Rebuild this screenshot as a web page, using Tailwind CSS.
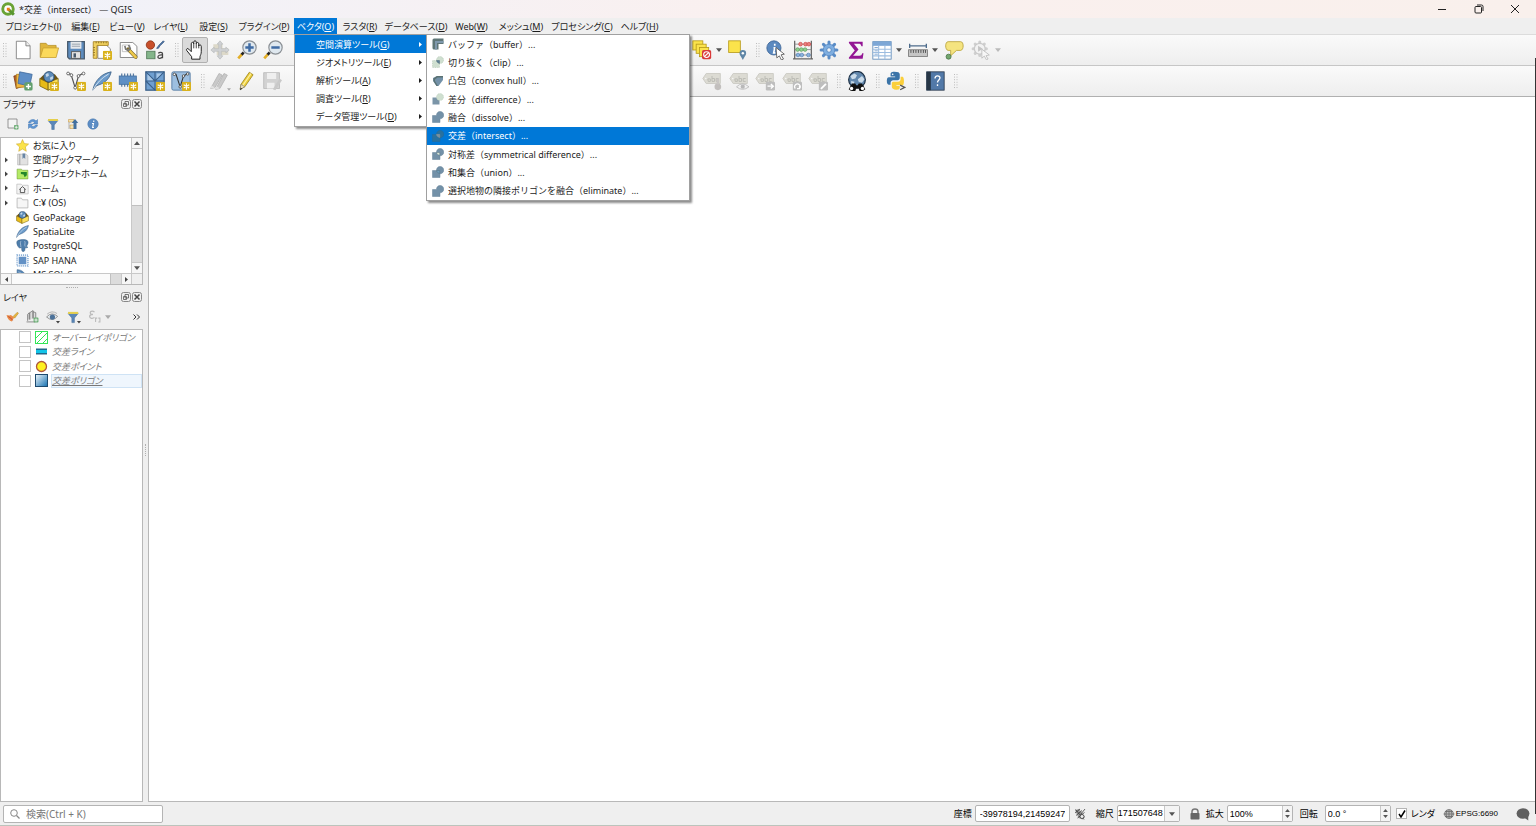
<!DOCTYPE html>
<html lang="ja">
<head>
    <meta charset="UTF-8">
    <meta name="viewport" content="width=device-width, initial-scale=1.0">
    <title>*交差（intersect） — QGIS</title>
    <script src="https://cdn.jsdelivr.net/npm/@tailwindcss/browser@4"></script>
    <style>
        body {
            font-family: "Noto Sans", "Noto Sans CJK JP", sans-serif;
            font-feature-settings: "palt";
        }
        .full-width {
            font-feature-settings: normal;
        }
    </style>
</head>
<body class="h-screen flex flex-col overflow-hidden bg-[#efefef] text-[9px] leading-none text-[#1c1c1c] whitespace-nowrap">

    <!-- Icon definitions -->
    <svg class="absolute w-0 h-0">
        <defs>
            <linearGradient id="blueFill" x1="0" y1="0" x2="1" y2="1"><stop offset="0" stop-color="#f2f8fc"/><stop offset="1" stop-color="#1470b0"/></linearGradient>
            <symbol id="star" viewBox="0 0 10 10"><rect width="10" height="10" rx="1.5" fill="#d9b21c"/><path d="M5 1.500v7M2 3.200l6 3.600M8 3.200L2 6.800" stroke="#fff" stroke-width="1.200"/></symbol>
            <symbol id="caret" viewBox="0 0 8 5"><path d="M0 0h8L4 5z" fill="currentColor"/></symbol>
            <symbol id="right" viewBox="0 0 5 8"><path d="M0 0v8l5-4z" fill="currentColor"/></symbol>
            <symbol id="grip" viewBox="0 0 4 14"><path d="M.5 0v14M3 0v14" stroke="#bdbdbd" stroke-dasharray="1 1.6"/></symbol>

            <symbol id="new" viewBox="0 0 24 24"><path d="M4 1.500h11.500l5 5.500v15.500H4z" fill="#fff" stroke="#777"/><path d="M15.500 1.500V7h5" fill="#eee" stroke="#777"/></symbol>
            <symbol id="open" viewBox="0 0 24 24"><path d="M1.500 20.500V4h7l2 2.500h10V10" fill="#e0b63c" stroke="#b8932a"/><path d="M1.500 21L5 9.500h18.500L20.500 21z" fill="#fbd95b" stroke="#c9a132"/></symbol>
            <symbol id="save" viewBox="0 0 24 24"><path d="M2 2h20v20.500H4L2 20.500z" fill="#5c8bbd" stroke="#47596b" stroke-width="1.500"/><rect x="5.500" y="2" width="13" height="8.500" fill="#e6e9ec"/><path d="M7 5h10M7 7.500h10" stroke="#8b97a3"/><rect x="6.500" y="14" width="11" height="8" fill="#e3e3e3" stroke="#555"/><rect x="9" y="16" width="3" height="5" fill="#47596b"/></symbol>
            <symbol id="layout" viewBox="0 0 24 24"><path d="M7 6h10l5 4.500V22H7z" fill="#fff" stroke="#777"/><path d="M1.500 2h18v4.500H6V22H1.500z" fill="#f1d15f" stroke="#a58121"/><path d="M5 2v2M8 2v2M11 2v2M14 2v2M17 2v2M1.500 9h2M1.500 12h2M1.500 15h2M1.500 18h2" stroke="#80641a"/><use href="#star" x="13" y="13" width="11" height="11"/></symbol>
            <symbol id="manager" viewBox="0 0 24 24"><path d="M1.500 3h15l5 4.500V21h-20z" fill="#fff" stroke="#777"/><path d="M4 6h9v8H4z" fill="none" stroke="#bbb"/><path d="M11 11l9 9.500" stroke="#7a6a30" stroke-width="4.500" stroke-linecap="round"/><path d="M12 12l8 8.500" stroke="#efc94a" stroke-width="3" stroke-linecap="round"/><path d="M7 7l1 4 3.500 1.500 2-2.500-2-4" fill="none" stroke="#777" stroke-width="2"/></symbol>
            <symbol id="style" viewBox="0 0 24 24"><circle cx="6.500" cy="6" r="5" fill="#c8502b" stroke="#8e3518"/><path d="M14 10l3-4 5-5 1 1-5 5-2 3z" fill="#4f78ab" stroke="#3d5d85"/><rect x="2" y="13.500" width="10" height="9" fill="#83b58a" stroke="#517a57"/><path d="M16 16c1-1.500 5-1.500 5 .5V22M21 18c-3-.5-5.500.5-5.500 2.300 0 2.500 4 2 5.500 0" fill="none" stroke="#444" stroke-width="1.500"/></symbol>
            <symbol id="hand" viewBox="0 0 24 24"><path d="M8 23v-3L2 12.500c-1-2 1.200-3 2.500-1.500L7.500 14V4.500c0-2.300 3-2.300 3 0V2.600c0-2.300 3-2.300 3 0v1.800c.3-2 3-2 3 .2V7c.5-1.700 3-1.400 3 .5V14c0 3-1 4-1.500 6v3z" fill="#fff" stroke="#222" stroke-width="1.200"/><path d="M10.500 4v6M13.500 4v6M16.500 6v4" stroke="#222"/></symbol>
            <symbol id="pansel" viewBox="0 0 24 24"><path d="M4 5h11v5h7v8H8v-5H4z" fill="#ddd9c9"/><path d="M12 1l3.500 4h-2v5.500H19v-2l4 3.500-4 3.500v-2h-5.500V19h2L12 23l-3.500-4h2v-5.500H5v2L1 12l4-3.500v2h5.500V5h-2z" fill="#d0d2d4" stroke="#b4b6b8" stroke-width=".7"/></symbol>
            <symbol id="lens" viewBox="0 0 24 24"><path d="M8 15l-3 3" stroke="#222" stroke-width="3"/><path d="M5.500 17.500L1.500 22" stroke="#e3ae27" stroke-width="3.200"/><circle cx="15" cy="9" r="8" fill="#dfe8ef" stroke="#8a8f94" stroke-width="1.400"/></symbol>
            <symbol id="zoomin" viewBox="0 0 24 24"><use href="#lens"/><path d="M15 4v10M10 9h10" stroke="#3f6ba4" stroke-width="3"/></symbol>
            <symbol id="zoomout" viewBox="0 0 24 24"><use href="#lens"/><path d="M10 9h10" stroke="#3f6ba4" stroke-width="3"/></symbol>

            <symbol id="deselect" viewBox="0 0 24 24"><g fill="#fbe34b" stroke="#b89b1b"><rect x="1" y="1" width="12" height="11"/><rect x="5" y="5" width="12" height="11"/><rect x="9" y="9" width="11" height="11"/></g><rect x="12" y="12" width="11" height="11" rx="2" fill="#d93a3a"/><circle cx="17.500" cy="17.500" r="3.500" fill="none" stroke="#fff" stroke-width="1.300"/><path d="M15 20l5-5" stroke="#fff" stroke-width="1.300"/></symbol>
            <symbol id="selloc" viewBox="0 0 24 24"><rect x="2" y="1" width="14" height="14" fill="#fbe34b" stroke="#b89b1b"/><path d="M19 24c-2-4-4-5.500-4-8a4 4 0 0 1 8 0c0 2.500-2 4-4 8z" fill="#5f86a6"/><circle cx="19" cy="16" r="1.500" fill="#fff"/></symbol>
            <symbol id="identify" viewBox="0 0 24 24"><circle cx="9.500" cy="9.500" r="8.500" fill="#5b89bf" stroke="#3e6697"/><path d="M10.500 4.500v2.500M9 9.500h1.500l-1.300 6h2" stroke="#fff" stroke-width="2" fill="none"/><path d="M12 9l10 8-4 .8 3 5-2.500 1.200-2.500-5-3 2.500z" fill="#fff" stroke="#555"/></symbol>
            <symbol id="abacus" viewBox="0 0 24 24"><path d="M2 1v22M22 1v22M0 22.500h24" stroke="#666" stroke-width="1.500"/><path d="M2 5h20M2 11.500h20M2 18h20" stroke="#888"/><g stroke-width=".8"><g fill="#e88080" stroke="#c44"><circle cx="9" cy="5" r="2.200"/><circle cx="15" cy="5" r="2.200"/><circle cx="19" cy="5" r="2.200"/></g><g fill="#8fd08f" stroke="#5a9a5a"><circle cx="5.500" cy="11.500" r="2.200"/><circle cx="10" cy="11.500" r="2.200"/><circle cx="14.500" cy="11.500" r="2.200"/></g><g fill="#8ab3dd" stroke="#4f7bb4"><circle cx="6" cy="18" r="2.200"/><circle cx="10.500" cy="18" r="2.200"/><circle cx="18.500" cy="18" r="2.200"/></g></g></symbol>
            <symbol id="gear" viewBox="0 0 24 24"><g stroke="#5a8cc6" stroke-width="3.600" stroke-linecap="round"><path d="M12 2.500v19M2.500 12h19M5.300 5.300l13.400 13.400M18.700 5.300L5.300 18.700"/></g><circle cx="12" cy="12" r="7" fill="#7eaee0" stroke="#5a8cc6"/><circle cx="12" cy="12" r="2.700" fill="#eef3f8" stroke="#4f82bd"/></symbol>
            <symbol id="sigma" viewBox="0 0 24 24"><path d="M3.500 2H20v5.500h-1.500C18 5 17 4.500 15 4.500H9.500l5.500 7-6.500 7.500H16c2 0 3-1 3.500-3H21L20 22.500H3.500V21l7-8.500-7-9z" fill="#931694"/></symbol>
            <symbol id="table" viewBox="0 0 24 24"><rect x="1" y="2" width="22" height="21" fill="#fff" stroke="#5b88b8"/><rect x="1" y="2" width="22" height="5" fill="#7da7d6"/><path d="M1 11h22M1 15h22M1 19h22M8 7v16M15.500 7v16" stroke="#9dbde0" stroke-width="1.300"/><path d="M3 9h4M3 13h4M3 17h4" stroke="#6d98c8"/></symbol>
            <symbol id="ruler" viewBox="0 0 24 24"><path d="M2 4.500v5M22 4.500v5M2 7h20" stroke="#4e6c8c" stroke-width="1.600"/><rect x=".7" y="11.700" width="22.600" height="8" fill="#c5c5c5" stroke="#777"/><path d="M3.500 12v3.500M6.500 12v3.500M9.500 12v3.500M12.500 12v3.500M15.500 12v3.500M18.500 12v3.500M21 12v3.500" stroke="#444"/></symbol>
            <symbol id="tip" viewBox="0 0 24 24"><path d="M5 2h15c4 0 4 10 0 10.500h-5L8 19v-6.500H5C1 12 1 2 5 2z" fill="#f5e480" stroke="#b8a23a"/><circle cx="5.500" cy="20" r="3" fill="#72a66e" stroke="#4d764a"/></symbol>
            <symbol id="action" viewBox="0 0 24 24"><g stroke="#cfcfcf" stroke-width="3.600" stroke-linecap="round"><path d="M10.500 2.500v16M2.500 10.500h16M5 5l11 11M16 5L5 16"/></g><circle cx="10.500" cy="10.500" r="6.500" fill="#f2f2f2" stroke="#c9c9c9" stroke-width="1.500"/><path d="M8.500 7v7l5.500-3.500z" fill="#c4c4c4"/><path d="M13 11l9 7-4 .8 2.500 4-2 1-2.500-4.500-3 2.500z" fill="#f7f7f7" stroke="#bbb"/></symbol>

            <symbol id="source" viewBox="0 0 24 24"><path d="M1 6l11-2 3 13-11 4z" fill="#b35c27" stroke="#7e3d16"/><path d="M4 4l12 0 1 15-13 1z" fill="#f0b73f" stroke="#b38122"/><path d="M8 1l15 3-3 14-14-3z" fill="#5e8ec6" stroke="#456e9f"/><rect x="13.500" y="13.500" width="10" height="10" rx="2" fill="#63a06e"/><path d="M18.500 15.500v6M15.500 18.500h6" stroke="#fff" stroke-width="1.700"/></symbol>
            <symbol id="gpkg" viewBox="0 0 24 24"><path d="M1 9l10 5v9L1 18z" fill="#e8bb17" stroke="#7a6412"/><path d="M11 14l12-5v9l-12 5z" fill="#fbe05a" stroke="#7a6412"/><path d="M1 9l4-4 14-1 4 5-12 5z" fill="#6e5512"/><circle cx="12" cy="7" r="6.300" fill="#5d8cba" stroke="#2c4b6b"/><path d="M8 4l3-1.500 1 3-3 2zM13 8l3.500-2 .5 3-3 2z" fill="#c4d7e8"/></symbol>
            <symbol id="gpkgNew" viewBox="0 0 24 24"><use href="#gpkg"/><use href="#star" x="13" y="13" width="11" height="11"/></symbol>
            <symbol id="shape" viewBox="0 0 24 24"><path d="M2.500 3l3.500 1 5 16 4-14 5-3" stroke="#555" stroke-width="1.400" fill="none"/><g fill="#fff" stroke="#555"><circle cx="2.500" cy="3" r="1.700"/><circle cx="6.500" cy="5" r="1.700"/><circle cx="11" cy="20" r="1.700"/><circle cx="15" cy="6" r="1.700"/><circle cx="21" cy="3" r="1.700"/></g><use href="#star" x="13" y="13" width="11" height="11"/></symbol>
            <symbol id="feather" viewBox="0 0 24 24"><path d="M1 23c1-6 4-11 8-15S18 2 23 1c-1 5-4 10-9 13-3 2-6 2.500-9 4z" fill="#6b9bcb" stroke="#3d6187"/><path d="M1 23C5 15 12 8 20 3.500" stroke="#e5eef6" fill="none"/></symbol>
            <symbol id="featherNew" viewBox="0 0 24 24"><use href="#feather"/><use href="#star" x="13" y="13" width="11" height="11"/></symbol>
            <symbol id="chip" viewBox="0 0 24 24"><path d="M4.500 3v16M8 3v16M11.500 3v16M15 3v16M18.500 3v16" stroke="#5a7da3" stroke-width="1.500"/><rect x="1.500" y="6" width="20.500" height="10" fill="#5e8fc4" stroke="#44709f"/><use href="#star" x="13" y="13" width="11" height="11"/></symbol>
            <symbol id="mesh" viewBox="0 0 24 24"><rect x="1" y="1" width="22" height="22" fill="#6f9fd0" stroke="#3a5f88" stroke-width="1.500"/><path d="M12 1v22M1 12h22M1 1l11 11 11-11M1 12l11 11" stroke="#3a5f88" stroke-width="1.300" fill="none"/><path d="M3 11l7 0-7-7zM14 3h6l-6 6z" fill="#a9c7e5"/><use href="#star" x="13" y="13" width="11" height="11"/></symbol>
            <symbol id="virtual" viewBox="0 0 24 24"><rect x="1" y="1" width="22" height="22" rx="2" fill="#9dbfe0" stroke="#4c749e"/><path d="M3 4l3 0 5 15 4-13 5-3" fill="none" stroke="#333" stroke-width="1.300"/><g fill="#fff" stroke="#444"><circle cx="4" cy="4" r="1.500"/><circle cx="11" cy="19" r="1.500"/><circle cx="15" cy="6" r="1.500"/><circle cx="20" cy="3.500" r="1.500"/></g><use href="#star" x="13" y="13" width="11" height="11"/></symbol>
            <symbol id="edits" viewBox="0 0 24 24"><path d="M2 21L12 3l4 2L7 20zM8 22L18 3l4 2-9 16z" fill="#c9c9c9" stroke="#b5b5b5"/><path d="M2 21l1-4 4 3zM8 22l1-4 4 3z" fill="#e2e2e2"/></symbol>
            <symbol id="pencil" viewBox="0 0 24 24"><path d="M5 22l1-6L16 1.500l4.500 3L10.500 19z" fill="#edcf3c" stroke="#9c8420"/><path d="M8 17.500L18 3" stroke="#fdf0a0" stroke-width="1.500"/><path d="M5 22l1-6 4.500 3z" fill="#efe1c0" stroke="#777" stroke-width=".7"/><path d="M5 23l.5-3 2 1.300z" fill="#222"/></symbol>
            <symbol id="saveGray" viewBox="0 0 24 24"><path d="M2 2h19v19H2z" fill="#d2d2d2" stroke="#bbb"/><path d="M6 2.500h11v7H6zM6 14h9v7H6z" fill="#efefef"/><path d="M13 22l8-13 3 2-8 12z" fill="#c9c9c9"/></symbol>
            <symbol id="tag" viewBox="0 0 24 24"><path d="M1 9l4-6h17v12H5z" fill="#dcdbd3" stroke="#c9c8c0"/><circle cx="4.500" cy="9" r="1" fill="#f5f5f5"/><path d="M7 9.500h3v3H7.500zM12 6v6.500h3V9h-3M20 9h-3v3.500h3" stroke="#bcbcb5" stroke-width="1.200" fill="none"/></symbol>
            <symbol id="tagPin" viewBox="0 0 24 24"><use href="#tag"/><circle cx="19" cy="19" r="4" fill="#c2bfbd"/><path d="M17.500 9h3v7h-3z" fill="#c9c6c4"/></symbol>
            <symbol id="tagEye" viewBox="0 0 24 24"><use href="#tag"/><path d="M9 19q7-7 15 0-8 6-15 0z" fill="#f0f0f0" stroke="#b9b9b9"/><circle cx="16.500" cy="18.800" r="2.500" fill="#b9b9b9"/></symbol>
            <symbol id="tagMove" viewBox="0 0 24 24"><use href="#tag"/><rect x="13" y="13" width="11" height="10.500" rx="1.500" fill="#bebebe"/><path d="M15 18.200h6M19 15.500l3 2.700-3 2.700" stroke="#fff" stroke-width="1.600" fill="none"/></symbol>
            <symbol id="tagRot" viewBox="0 0 24 24"><use href="#tag"/><rect x="13" y="13" width="11" height="10.500" rx="1.500" fill="#bebebe"/><path d="M16 21a3.300 3.300 0 1 1 5 0M21 18v3h-3" stroke="#fff" stroke-width="1.500" fill="none"/></symbol>
            <symbol id="tagEdit" viewBox="0 0 24 24"><use href="#tag"/><rect x="13" y="13" width="11" height="10.500" rx="1.500" fill="#bebebe"/><path d="M15.500 21.500l6-6" stroke="#fff" stroke-width="2.300"/></symbol>
            <symbol id="globe" viewBox="0 0 24 24"><circle cx="12" cy="10.500" r="10" fill="#6288ae" stroke="#1e3146" stroke-width="1.500"/><path d="M4 6l5-3 3 2-2 4-4 1zM13 10l5-4 3 4-3 4-4-1zM5 12l4 1-1 3-3-1z" fill="#cbdcea"/><path d="M6 15h4l1 2h2l1-2h4l4 7-3 2h-4l-1-3h-3l-1 3H5l-3-2z" fill="#111"/><circle cx="5.500" cy="21" r="2" fill="#fff"/><circle cx="18.500" cy="21" r="2" fill="#fff"/></symbol>
            <symbol id="python" viewBox="0 0 24 24"><path d="M10 1c-4 0-4.500 1.500-4.500 3v2.500h5.500v1H3.500C1.500 7.500 1 9.500 1 12c0 3 1 4.500 2.500 4.500h2V14c0-2 1.500-3 3-3H14c1.500 0 2.500-1 2.500-2.500V4c0-2-2-3-6.500-3z" fill="#3b74a8"/><circle cx="8" cy="4" r="1" fill="#fff"/><path d="M17.500 7v3c0 2-1.500 3-3 3H9c-1.500 0-2 1-2 2v4c0 2 2 3.500 5 3.500 4 0 4.500-1 4.500-3V18h-4v-1h8c1.500-1 1.500-9-.5-10z" fill="#fbcf3b"/><path d="M17 17l5.500 2.700L17 22.500" fill="none" stroke="#555" stroke-width="1.500"/></symbol>
            <symbol id="book" viewBox="0 0 24 24"><rect x="2" y="1" width="21" height="22" fill="#5279a8" stroke="#2b3b4e"/><rect x="2" y="1" width="5" height="22" fill="#273646"/><path d="M12 9c0-4 6-4 6-.8 0 2.500-3 2.500-3 5.500M15 16v2" stroke="#fff" stroke-width="1.600" fill="none"/></symbol>

            <!-- dock icons -->
            <symbol id="addLayer" viewBox="0 0 24 24"><path d="M2 2h18v18H2z" fill="#f4f4f4" stroke="#777" stroke-width="1.500"/><rect x="14" y="14" width="9" height="9" rx="1.500" fill="#6fae78"/><path d="M18.500 15.500v6M15.500 18.500h6" stroke="#fff" stroke-width="1.500"/></symbol>
            <symbol id="refresh" viewBox="0 0 24 24"><path d="M3 10C4 3 14 1 18 6l3-3v9h-9l3-3c-3-3-7-2-8 1zM21 14c-1 7-11 9-15 4l-3 3v-9h9l-3 3c3 3 7 2 8-1z" fill="#5f95d2" stroke="#4177b2"/></symbol>
            <symbol id="filter" viewBox="0 0 24 24"><path d="M2 5h20l-7.500 9v9h-5v-9z" fill="#5b87b8" stroke="#446a95"/><rect x="2" y="2" width="20" height="4" fill="#e5cf4d"/></symbol>
            <symbol id="collapse" viewBox="0 0 24 24"><path d="M3 3h11v5H3zM6 14h10v7H6z" fill="#f3e2b0" stroke="#c78c2a"/><path d="M4 8v14" stroke="#777"/><path d="M16 2l6.500 8H19v12h-6V10H9.500z" fill="#44719f"/></symbol>
            <symbol id="info" viewBox="0 0 24 24"><circle cx="12" cy="12" r="10.500" fill="#5b8cc4" stroke="#4474ab"/><path d="M13.500 5v3M10 11h3l-1.700 8h2.500" stroke="#fff" stroke-width="2.200" fill="none"/></symbol>
            <symbol id="fav" viewBox="0 0 24 24"><path d="M12 1l3.300 7.500 8 .8-6 5.400 1.700 8L12 18.500l-7 4.200 1.700-8-6-5.400 8-.8z" fill="#fbe34a" stroke="#c9a321"/></symbol>
            <symbol id="bookmark" viewBox="0 0 24 24"><path d="M3 2h15l4 3v17H3z" fill="#e2e2e2" stroke="#aaa"/><path d="M7 2v20" stroke="#aaa" stroke-width="2"/><path d="M12 1h5v10l-2.500-2.500L12 11z" fill="#6785a5"/></symbol>
            <symbol id="projHome" viewBox="0 0 24 24"><path d="M2 4h8l2 2h10v16H2z" fill="#b4ea66" stroke="#6c9a2f"/><path d="M9 9h11v6l-4 4-2-5-5-1z" fill="#23862b"/></symbol>
            <symbol id="home" viewBox="0 0 24 24"><path d="M1.500 4h8l2 2h11v16h-21z" fill="#f4f4f4" stroke="#aaa"/><path d="M6 14l6-5.500 6 5.500M8 13v6.500h8V13" fill="none" stroke="#444" stroke-width="1.600"/></symbol>
            <symbol id="folder" viewBox="0 0 24 24"><path d="M2 4h8l2 3h10v15H2z" fill="#f6f6f6" stroke="#aaa" stroke-width="1.300"/></symbol>
            <symbol id="pg" viewBox="0 0 24 24"><path d="M3 3c5-2 14-3 18 0 3 3 0 8-2 11l3 1c-2 2-4 1-5 1-1 4 0 7-4 7-3 0-2-4-3-8-3 3-5 1-6-1C2 11 0 5 3 3z" fill="#4e7dab" stroke="#3b648c"/><path d="M9 4c-2 3 0 7 0 11M16 4c2 4-1 6 1 10" stroke="#e2ebf3" fill="none"/></symbol>
            <symbol id="hana" viewBox="0 0 24 24"><rect x="2" y="2" width="20" height="20" fill="none" stroke="#8fb2d8" stroke-width="3" stroke-dasharray="2 1.600"/><rect x="5" y="5" width="14" height="14" fill="#6391c5"/></symbol>
            <symbol id="mssql" viewBox="0 0 24 24"><path d="M2 3c9 0 16 6 20 20C16 17 8 20 2 17z" fill="#5584b4" stroke="#3c668f"/><path d="M4 7c5 1 9 5 12 9" stroke="#c7d8e8" fill="none"/></symbol>
            <symbol id="brush" viewBox="0 0 24 24"><path d="M13 12l8-8 2 2-7 9z" fill="#e6b63d" stroke="#b4862a"/><path d="M1 9l5 1 3-1 6 5-4 7c-5-1-9-6-10-12z" fill="#ea8a46"/><path d="M4 12l5 3 3 4" stroke="#b3483b" stroke-width="1.500" fill="none"/></symbol>
            <symbol id="group" viewBox="0 0 24 24"><path d="M3 20V8l3-3v12M7 18V5l6-4v14M13 16V3l5 2v12M1 22h16" fill="#ddd" stroke="#777" stroke-width="1.500"/><rect x="14" y="14" width="9" height="9" rx="1.500" fill="#6fae78"/><path d="M18.500 15.500v6M15.500 18.500h6" stroke="#fff" stroke-width="1.500"/></symbol>
            <symbol id="eye" viewBox="0 0 24 24"><path d="M1 12Q10 2 20 11 11 21 1 12z" fill="#e9eef2" stroke="#888" stroke-width="1.500"/><circle cx="11" cy="12" r="4.500" fill="#4d7299"/><path d="M2 7Q10 0 19 6" stroke="#aaa" fill="none" stroke-width="1.500"/><path d="M17 19h7l-3.500 4z" fill="#444"/></symbol>
            <symbol id="filterMenu" viewBox="0 0 24 24"><use href="#filter" width="21" height="24"/><path d="M17 19h7l-3.500 4z" fill="#444"/></symbol>
            <symbol id="expr" viewBox="0 0 24 24"><path d="M12 4C8 0 2 3 5 7c1 2 4 1 4 1s-6 0-6 4 6 4 9 2" stroke="#bbb" stroke-width="2.300" fill="none"/><path d="M14 22v-7h3M19 15h3v7h-3" stroke="#bbb" stroke-width="2" fill="none"/></symbol>

            <!-- geoprocessing icons -->
            <symbol id="buffer" viewBox="0 0 24 24"><path d="M1 4q0-3 3-3h19v11H13v11H4q-3 0-3-3z" fill="#5f7677"/><path d="M8 23V8h15" fill="none" stroke="#8099ad" stroke-width="4"/></symbol>
            <symbol id="clip" viewBox="0 0 24 24"><path d="M1 9h14v14H1z" fill="#cfdfd0" stroke="#a9bfab" stroke-dasharray="2 1.500"/><circle cx="16" cy="8" r="7" fill="#cfdfd0" stroke="#a9bfab" stroke-dasharray="2 1.500"/><path d="M9 9h6v6C12 14 9.500 12 9 9z" fill="#5e7f96" stroke="#4c6878"/></symbol>
            <symbol id="hull" viewBox="0 0 24 24"><path d="M2 6l8-4h12v8L13 22H9L2 12z" fill="#7391a8"/><path d="M9 22L3 12V7l7-5h12v3H11L6 9v3l6 10z" fill="#5b7272"/></symbol>
            <symbol id="diff" viewBox="0 0 24 24"><path d="M1 9h14v14H1z" fill="#7b95a8"/><circle cx="16" cy="8" r="7" fill="#cfdfd0" stroke="#b3c8b5" stroke-dasharray="2 1.500"/></symbol>
            <symbol id="dissolve" viewBox="0 0 24 24"><path d="M1 9h8a7.300 7.300 0 1 1 7 6.500V23H1z" fill="#7391a8" stroke="#668398"/></symbol>
            <symbol id="inter" viewBox="0 0 24 24"><path d="M1 9h8a7.300 7.300 0 1 1 7 6.500V23H1z" fill="#28719f" stroke="#2b6b93"/><path d="M9 9h6.500v6C12 14 9.500 12 9 9z" fill="#7391a8" stroke="#a29a8a"/></symbol>
            <symbol id="symdiff" viewBox="0 0 24 24"><use href="#dissolve"/><path d="M9 9h6.500v6C12 14 9.500 12 9 9z" fill="#dce8dc" stroke="#54707e"/></symbol>
            <symbol id="union" viewBox="0 0 24 24"><use href="#dissolve"/><path d="M9 9h6.500v6C12 14 9.500 12 9 9z" fill="#6f9dbb" stroke="#54707e"/></symbol>
        </defs>
    </svg>

    <!-- Title bar -->
    <header class="h-[18px] shrink-0 flex items-center bg-linear-to-r from-[#f0f2fa] via-[#faf0ef] to-[#f9f0ec]">
        <svg class="w-[14px] h-[14px] ml-px mr-1" viewBox="0 0 24 24"><circle cx="12" cy="12" r="9" fill="#fff" stroke="#6aa337" stroke-width="5"/><path d="M13 13l9 9" stroke="#589632" stroke-width="5"/><path d="M10 10h6l-2 2 2 2-2 2-2-2-2 2z" fill="#ee7913"/></svg>
        <h1 class="full-width">*交差（intersect） — QGIS</h1>
        <div class="ml-auto flex w-[87px] mr-[14px] items-center justify-between">
            <button aria-label="最小化"><svg class="w-[14px] h-[10px]" viewBox="0 0 14 10"><path d="M3 5.500h8" stroke="#222"/></svg></button>
            <button aria-label="元に戻す"><svg class="w-[10px] h-[10px]" viewBox="0 0 10 10"><rect x="1" y="2.500" width="6.500" height="6.500" rx="1" fill="none" stroke="#222"/><path d="M3 1h4.500Q9 1 9 2.500V7" fill="none" stroke="#222"/></svg></button>
            <button aria-label="閉じる"><svg class="w-[14px] h-[10px]" viewBox="0 0 14 10"><path d="M3 1l8 8M11 1L3 9" stroke="#222"/></svg></button>
        </div>
    </header>

    <!-- Menu bar -->
    <nav class="relative z-10 h-4 shrink-0 flex pl-[2px]">
        <button class="w-[63px]">プロジェクト(<u>J</u>)</button>
        <button class="w-[41px]">編集(<u>E</u>)</button>
        <button class="w-[42px]">ビュー(<u>V</u>)</button>
        <button class="w-[45px]">レイヤ(<u>L</u>)</button>
        <button class="w-[41px]">設定(<u>S</u>)</button>
        <button class="w-[60px]">プラグイン(<u>P</u>)</button>
        <div class="relative w-[43px]">
            <button class="w-full h-full bg-[#0078d7] text-white">ベクタ(<u>O</u>)</button>
            <ul class="absolute left-0 top-4 w-[133px] h-[93px] grid grid-rows-5 bg-white border border-[#a0a0a0] shadow-[2px_2px_2px_rgba(0,0,0,0.45)]">
                <li class="grid bg-[#0078d7] text-white"><button class="flex items-center justify-between pl-[21px] pr-1"><span>空間演算ツール(<u>G</u>)</span><svg class="w-[3px] h-[5px]"><use href="#right"/></svg></button></li>
                <li class="grid"><button class="flex items-center justify-between pl-[21px] pr-1"><span>ジオメトリツール(<u>E</u>)</span><svg class="w-[3px] h-[5px]"><use href="#right"/></svg></button></li>
                <li class="grid"><button class="flex items-center justify-between pl-[21px] pr-1"><span>解析ツール(<u>A</u>)</span><svg class="w-[3px] h-[5px]"><use href="#right"/></svg></button></li>
                <li class="grid"><button class="flex items-center justify-between pl-[21px] pr-1"><span>調査ツール(<u>R</u>)</span><svg class="w-[3px] h-[5px]"><use href="#right"/></svg></button></li>
                <li class="grid"><button class="flex items-center justify-between pl-[21px] pr-1"><span>データ管理ツール(<u>D</u>)</span><svg class="w-[3px] h-[5px]"><use href="#right"/></svg></button></li>
            </ul>
            <ul class="full-width absolute left-[132px] top-4 w-[264px] h-[167px] grid grid-rows-9 bg-white border border-[#a0a0a0] shadow-[2px_2px_2px_rgba(0,0,0,0.45)]">
                <li class="grid"><button class="flex items-center gap-1 pl-[5px]"><svg class="w-3 h-3"><use href="#buffer"/></svg>バッファ（buffer）...</button></li>
                <li class="grid"><button class="flex items-center gap-1 pl-[5px]"><svg class="w-3 h-3"><use href="#clip"/></svg>切り抜く（clip）...</button></li>
                <li class="grid"><button class="flex items-center gap-1 pl-[5px]"><svg class="w-3 h-3"><use href="#hull"/></svg>凸包（convex hull）...</button></li>
                <li class="grid"><button class="flex items-center gap-1 pl-[5px]"><svg class="w-3 h-3"><use href="#diff"/></svg>差分（difference）...</button></li>
                <li class="grid"><button class="flex items-center gap-1 pl-[5px]"><svg class="w-3 h-3"><use href="#dissolve"/></svg>融合（dissolve）...</button></li>
                <li class="grid bg-[#0078d7] text-white"><button class="flex items-center gap-1 pl-[5px]"><svg class="w-3 h-3"><use href="#inter"/></svg>交差（intersect）...</button></li>
                <li class="grid"><button class="flex items-center gap-1 pl-[5px]"><svg class="w-3 h-3"><use href="#symdiff"/></svg>対称差（symmetrical difference）...</button></li>
                <li class="grid"><button class="flex items-center gap-1 pl-[5px]"><svg class="w-3 h-3"><use href="#union"/></svg>和集合（union）...</button></li>
                <li class="grid"><button class="flex items-center gap-1 pl-[5px]"><svg class="w-3 h-3"><use href="#dissolve"/></svg>選択地物の隣接ポリゴンを融合（eliminate）...</button></li>
            </ul>
        </div>
        <button class="w-[46px]">ラスタ(<u>R</u>)</button>
        <button class="w-[66px]">データベース(<u>D</u>)</button>
        <button class="w-[45px]">Web(<u>W</u>)</button>
        <button class="w-[54px]">メッシュ(<u>M</u>)</button>
        <button class="w-[68px]">プロセシング(<u>C</u>)</button>
        <button class="w-[47px]">ヘルプ(<u>H</u>)</button>
    </nav>

    <!-- Toolbars -->
    <div class="h-8 shrink-0 flex items-center border-t border-b border-t-[#dcdcdc] border-b-[#c6c6c6] bg-linear-to-b from-[#fafafa] to-[#eeeeee]">
        <svg class="w-1 h-[14px] ml-[3px] mr-[6px]"><use href="#grip"/></svg>
        <div class="flex justify-between w-[152px]">
            <button aria-label="新規"><svg class="w-5 h-5"><use href="#new"/></svg></button>
            <button aria-label="開く"><svg class="w-5 h-5"><use href="#open"/></svg></button>
            <button aria-label="保存"><svg class="w-5 h-5"><use href="#save"/></svg></button>
            <button aria-label="新規レイアウト"><svg class="w-5 h-5"><use href="#layout"/></svg></button>
            <button aria-label="レイアウトマネージャ"><svg class="w-5 h-5"><use href="#manager"/></svg></button>
            <button aria-label="スタイルマネージャ"><svg class="w-5 h-5"><use href="#style"/></svg></button>
        </div>
        <svg class="w-1 h-[14px] ml-[10px] mr-[3px]"><use href="#grip"/></svg>
        <button aria-label="地図を移動" class="flex items-center justify-center w-[26px] h-[26px] rounded-[2px] border border-[#b0b0b0] bg-[#dadada]"><svg class="w-5 h-5"><use href="#hand"/></svg></button>
        <div class="flex justify-between w-[73px] ml-[2px] mr-[409px]">
            <button aria-label="選択部分に移動"><svg class="w-5 h-5"><use href="#pansel"/></svg></button>
            <button aria-label="拡大"><svg class="w-5 h-5"><use href="#zoomin"/></svg></button>
            <button aria-label="縮小"><svg class="w-5 h-5"><use href="#zoomout"/></svg></button>
        </div>
        <button aria-label="選択解除" class="flex items-center gap-1"><svg class="w-5 h-5"><use href="#deselect"/></svg><svg class="w-[6px] h-1 text-[#555]"><use href="#caret"/></svg></button>
        <button aria-label="位置で選択" class="ml-[5px]"><svg class="w-5 h-5"><use href="#selloc"/></svg></button>
        <svg class="w-1 h-[14px] ml-[9px] mr-[6px]"><use href="#grip"/></svg>
        <div class="flex justify-between w-[126px]">
            <button aria-label="地物情報"><svg class="w-5 h-5"><use href="#identify"/></svg></button>
            <button aria-label="フィールド計算機"><svg class="w-5 h-5"><use href="#abacus"/></svg></button>
            <button aria-label="プロセシング"><svg class="w-5 h-5"><use href="#gear"/></svg></button>
            <button aria-label="統計"><svg class="w-5 h-5"><use href="#sigma"/></svg></button>
            <button aria-label="属性テーブル"><svg class="w-5 h-5"><use href="#table"/></svg></button>
        </div>
        <svg class="w-[6px] h-1 ml-1 mr-[6px] text-[#555]"><use href="#caret"/></svg>
        <button aria-label="計測" class="flex items-center gap-1"><svg class="w-5 h-5"><use href="#ruler"/></svg><svg class="w-[6px] h-1 text-[#555]"><use href="#caret"/></svg></button>
        <button aria-label="地図のヒント" class="ml-[6px]"><svg class="w-5 h-5"><use href="#tip"/></svg></button>
        <button aria-label="アクション" class="flex items-center gap-1 ml-[7px]"><svg class="w-5 h-5"><use href="#action"/></svg><svg class="w-[6px] h-1 text-[#bbb]"><use href="#caret"/></svg></button>
    </div>
    <div class="h-[31px] shrink-0 flex items-center border-b border-[#b0b0b0] bg-linear-to-b from-[#fafafa] to-[#eeeeee]">
        <svg class="w-1 h-[14px] ml-[3px] mr-[6px]"><use href="#grip"/></svg>
        <div class="flex justify-between w-[178px]">
            <button aria-label="データソースマネージャ"><svg class="w-5 h-5"><use href="#source"/></svg></button>
            <button aria-label="新規GeoPackage"><svg class="w-5 h-5"><use href="#gpkgNew"/></svg></button>
            <button aria-label="新規シェープファイル"><svg class="w-5 h-5"><use href="#shape"/></svg></button>
            <button aria-label="新規SpatiaLite"><svg class="w-5 h-5"><use href="#featherNew"/></svg></button>
            <button aria-label="新規一時レイヤ"><svg class="w-5 h-5"><use href="#chip"/></svg></button>
            <button aria-label="新規メッシュ"><svg class="w-5 h-5"><use href="#mesh"/></svg></button>
            <button aria-label="新規仮想レイヤ"><svg class="w-5 h-5"><use href="#virtual"/></svg></button>
        </div>
        <svg class="w-1 h-[14px] ml-[10px] mr-1"><use href="#grip"/></svg>
        <div class="flex justify-between w-[73px] mr-[420px]">
            <button aria-label="現在の編集" class="relative"><svg class="w-5 h-5"><use href="#edits"/></svg><svg class="absolute -right-[2px] bottom-0 w-1 h-[3px] text-[#aaa]"><use href="#caret"/></svg></button>
            <button aria-label="編集モード切替"><svg class="w-5 h-5"><use href="#pencil"/></svg></button>
            <button aria-label="編集を保存"><svg class="w-5 h-5"><use href="#saveGray"/></svg></button>
        </div>
        <div class="flex justify-between w-[126px]">
            <button aria-label="ラベル固定"><svg class="w-5 h-5"><use href="#tagPin"/></svg></button>
            <button aria-label="ラベル表示"><svg class="w-5 h-5"><use href="#tagEye"/></svg></button>
            <button aria-label="ラベル移動"><svg class="w-5 h-5"><use href="#tagMove"/></svg></button>
            <button aria-label="ラベル回転"><svg class="w-5 h-5"><use href="#tagRot"/></svg></button>
            <button aria-label="ラベル変更"><svg class="w-5 h-5"><use href="#tagEdit"/></svg></button>
        </div>
        <svg class="w-1 h-[14px] ml-[9px] mr-[6px]"><use href="#grip"/></svg>
        <button aria-label="メタサーチ"><svg class="w-5 h-5"><use href="#globe"/></svg></button>
        <svg class="w-1 h-[14px] ml-[9px] mr-[6px]"><use href="#grip"/></svg>
        <button aria-label="Pythonコンソール"><svg class="w-5 h-5"><use href="#python"/></svg></button>
        <svg class="w-1 h-[14px] ml-[9px] mr-[6px]"><use href="#grip"/></svg>
        <button aria-label="ヘルプ"><svg class="w-5 h-5"><use href="#book"/></svg></button>
        <svg class="w-1 h-[14px] ml-[9px]"><use href="#grip"/></svg>
    </div>

    <main class="flex-1 min-h-0 flex">
        <!-- Docks -->
        <aside class="w-[143px] shrink-0 flex flex-col">
            <section>
                <div class="h-[14px] flex items-center pl-[3px] pr-[1px] gap-[1px]">
                    <h2 class="mr-auto">ブラウザ</h2>
                    <button aria-label="フロート"><svg class="w-[10px] h-[10px]" viewBox="0 0 10 10"><rect x=".5" y=".5" width="9" height="9" rx="2" fill="none" stroke="#888"/><path d="M4 2.500h3.500V6H4zM2.500 4.500h3v3h-3z" fill="none" stroke="#555" stroke-width=".8"/></svg></button>
                    <button aria-label="閉じる"><svg class="w-[10px] h-[10px]" viewBox="0 0 10 10"><rect x=".5" y=".5" width="9" height="9" rx="2" fill="none" stroke="#888"/><path d="M2.500 2.500l5 5M7.500 2.500l-5 5" stroke="#444" stroke-width="1.500"/></svg></button>
                </div>
                <div class="h-[26px] flex items-center gap-2 pl-[7px]">
                    <button aria-label="レイヤ追加"><svg class="w-3 h-3"><use href="#addLayer"/></svg></button>
                    <button aria-label="更新"><svg class="w-3 h-3"><use href="#refresh"/></svg></button>
                    <button aria-label="フィルタ"><svg class="w-3 h-3"><use href="#filter"/></svg></button>
                    <button aria-label="折りたたむ"><svg class="w-3 h-3"><use href="#collapse"/></svg></button>
                    <button aria-label="情報"><svg class="w-3 h-3"><use href="#info"/></svg></button>
                </div>
                <div class="border border-[#b8b8b8] bg-white">
                    <div class="flex h-[135px]">
                        <div class="flex-1 overflow-hidden">
                            <ul class="h-[144px] grid grid-rows-10">
                                <li class="flex items-center gap-1 pl-[15px]"><svg class="w-[13px] h-[13px]"><use href="#fav"/></svg>お気に入り</li>
                                <li class="flex items-center gap-1 pl-1"><svg class="w-[3px] h-[6px] mr-1 text-[#444]"><use href="#right"/></svg><svg class="w-[13px] h-[13px]"><use href="#bookmark"/></svg>空間ブックマーク</li>
                                <li class="flex items-center gap-1 pl-1"><svg class="w-[3px] h-[6px] mr-1 text-[#444]"><use href="#right"/></svg><svg class="w-[13px] h-[13px]"><use href="#projHome"/></svg>プロジェクトホーム</li>
                                <li class="flex items-center gap-1 pl-1"><svg class="w-[3px] h-[6px] mr-1 text-[#444]"><use href="#right"/></svg><svg class="w-[13px] h-[13px]"><use href="#home"/></svg>ホーム</li>
                                <li class="flex items-center gap-1 pl-1"><svg class="w-[3px] h-[6px] mr-1 text-[#444]"><use href="#right"/></svg><svg class="w-[13px] h-[13px]"><use href="#folder"/></svg>C:¥ (OS)</li>
                                <li class="flex items-center gap-1 pl-[15px]"><svg class="w-[13px] h-[13px]"><use href="#gpkg"/></svg>GeoPackage</li>
                                <li class="flex items-center gap-1 pl-[15px]"><svg class="w-[13px] h-[13px]"><use href="#feather"/></svg>SpatiaLite</li>
                                <li class="flex items-center gap-1 pl-[15px]"><svg class="w-[13px] h-[13px]"><use href="#pg"/></svg>PostgreSQL</li>
                                <li class="flex items-center gap-1 pl-[15px]"><svg class="w-[13px] h-[13px]"><use href="#hana"/></svg>SAP HANA</li>
                                <li class="flex items-center gap-1 pl-[15px]"><svg class="w-[13px] h-[13px]"><use href="#mssql"/></svg>MS SQL Server</li>
                            </ul>
                        </div>
                        <div class="w-[11px] flex flex-col border-l border-[#c8c8c8] bg-[#dcdcdc]">
                            <span class="h-[11px] flex items-center justify-center bg-[#f6f6f6] border-b border-[#c8c8c8]"><svg class="w-[6px] h-1 rotate-180 text-[#555]"><use href="#caret"/></svg></span>
                            <span class="h-[57px] bg-[#fafafa] border-b border-[#c0c0c0]"></span>
                            <span class="mt-auto h-[11px] flex items-center justify-center bg-[#f6f6f6] border-t border-[#c8c8c8]"><svg class="w-[6px] h-1 text-[#555]"><use href="#caret"/></svg></span>
                        </div>
                    </div>
                    <div class="flex h-[11px] border-t border-[#c8c8c8] bg-[#dcdcdc]">
                        <span class="w-[11px] flex items-center justify-center bg-[#f6f6f6] border-r border-[#c8c8c8]"><svg class="w-[3px] h-[5px] rotate-180 text-[#444]"><use href="#right"/></svg></span>
                        <span class="flex-1 bg-[#fafafa] border-r border-[#c0c0c0]"></span>
                        <span class="w-[10px]"></span>
                        <span class="w-[11px] flex items-center justify-center bg-[#f6f6f6] border-x border-[#c8c8c8]"><svg class="w-[3px] h-[5px] text-[#444]"><use href="#right"/></svg></span>
                        <span class="w-[10px] bg-[#efefef]"></span>
                    </div>
                </div>
            </section>
            <div class="h-[5px] flex items-center justify-center"><span class="w-3 border-t border-dotted border-[#b0b0b0]"></span></div>
            <section class="flex-1 flex flex-col">
                <div class="h-[14px] flex items-center pl-[3px] pr-[1px] gap-[1px]">
                    <h2 class="mr-auto">レイヤ</h2>
                    <button aria-label="フロート"><svg class="w-[10px] h-[10px]" viewBox="0 0 10 10"><rect x=".5" y=".5" width="9" height="9" rx="2" fill="none" stroke="#888"/><path d="M4 2.500h3.500V6H4zM2.500 4.500h3v3h-3z" fill="none" stroke="#555" stroke-width=".8"/></svg></button>
                    <button aria-label="閉じる"><svg class="w-[10px] h-[10px]" viewBox="0 0 10 10"><rect x=".5" y=".5" width="9" height="9" rx="2" fill="none" stroke="#888"/><path d="M2.500 2.500l5 5M7.500 2.500l-5 5" stroke="#444" stroke-width="1.500"/></svg></button>
                </div>
                <div class="h-[25px] flex items-center gap-[7px] pl-[6px] pr-[3px]">
                    <button aria-label="スタイル"><svg class="w-[13px] h-[13px]"><use href="#brush"/></svg></button>
                    <button aria-label="グループ追加"><svg class="w-[13px] h-[13px]"><use href="#group"/></svg></button>
                    <button aria-label="表示テーマ"><svg class="w-[14px] h-[14px]"><use href="#eye"/></svg></button>
                    <button aria-label="凡例フィルタ"><svg class="w-[14px] h-[14px]"><use href="#filterMenu"/></svg></button>
                    <button aria-label="式フィルタ" class="flex items-center gap-1"><svg class="w-[13px] h-[13px]"><use href="#expr"/></svg><svg class="w-[6px] h-1 text-[#aaa]"><use href="#caret"/></svg></button>
                    <button aria-label="その他" class="ml-auto"><svg class="w-[7px] h-[6px]" viewBox="0 0 7 6"><path d="M.5 .5L3 3 .5 5.500M4 .5L6.500 3 4 5.500" fill="none" stroke="#333"/></svg></button>
                </div>
                <div class="flex-1 border border-[#b8b8b8] bg-white">
                    <ul class="h-[58px] grid grid-rows-4 pl-[18px] italic text-[#777]">
                        <li><label class="h-full flex items-center gap-1"><input type="checkbox" class="appearance-none w-3 h-3 border border-[#c4c4c4] bg-white"><svg class="w-[13px] h-[13px]" viewBox="0 0 13 13"><rect x=".5" y=".5" width="12" height="12" fill="#fff" stroke="#33e657"/><path d="M1 7l6-6M2 12L12 2M8 12l4-4" stroke="#33e657"/></svg>オーバーレイポリゴン</label></li>
                        <li><label class="h-full flex items-center gap-1"><input type="checkbox" class="appearance-none w-3 h-3 border border-[#c4c4c4] bg-white"><svg class="w-[13px] h-[13px]" viewBox="0 0 13 13"><path d="M1 6.500h11" stroke="#22698c" stroke-width="6"/><path d="M1 6.500h11" stroke="#12c4e8" stroke-width="3"/></svg>交差ライン</label></li>
                        <li><label class="h-full flex items-center gap-1"><input type="checkbox" class="appearance-none w-3 h-3 border border-[#c4c4c4] bg-white"><svg class="w-[13px] h-[13px]" viewBox="0 0 13 13"><circle cx="6.500" cy="6.500" r="5" fill="#fff01f" stroke="#b0583c" stroke-width="1.300"/></svg>交差ポイント</label></li>
                        <li><label class="h-full flex items-center gap-1"><input type="checkbox" class="appearance-none w-3 h-3 border border-[#c4c4c4] bg-white"><svg class="w-[13px] h-[13px]" viewBox="0 0 13 13"><rect x=".5" y=".5" width="12" height="12" fill="url(#blueFill)" stroke="#1e4a6e"/></svg><span class="flex-1 h-full flex items-center -ml-px underline border border-[#cfe3f5] bg-[#eff6fd]">交差ポリゴン</span></label></li>
                    </ul>
                </div>
            </section>
        </aside>
        <div class="w-[5px] shrink-0 flex items-center justify-center"><span class="h-3 border-l border-dotted border-[#b0b0b0]"></span></div>
        <div class="flex-1 bg-white border-l border-b border-[#b8b8b8]"></div>
    </main>

    <!-- Status bar -->
    <footer class="h-6 shrink-0 flex items-center border-b border-[#bcc4bc] pl-[3px] pr-[6px] text-black">
        <label class="flex items-center gap-[6px] w-[160px] h-[18px] pl-[6px] border border-[#b4b4b4] rounded-[2px] bg-white">
            <svg class="w-[10px] h-[10px] shrink-0" viewBox="0 0 10 10"><circle cx="4" cy="4" r="3.300" fill="none" stroke="#888"/><path d="M6.500 6.500L9.500 9.500" stroke="#888" stroke-width="1.300"/></svg>
            <input type="text" aria-label="検索" placeholder="検索(Ctrl + K)" class="w-full text-[10px] placeholder:text-[#777] outline-none">
        </label>
        <label for="coord" class="ml-auto w-[21px]">座標</label>
        <input id="coord" type="text" value="-39978194,21459247" class="w-[95px] h-[17px] px-1 border border-[#b4b4b4] rounded-[2px] bg-white font-['Liberation_Sans']">
        <svg class="w-3 h-3 ml-1" viewBox="0 0 24 24"><path d="M2 4l8-2 12 16-5 5-8-3z" fill="#999"/><path d="M2 10l10-8M4 15L16 5M7 20L21 9M3 3l17 20M22 2l-9 11" stroke="#333" stroke-width="1.500"/><circle cx="16" cy="17" r="4" fill="#eee" stroke="#333" stroke-width="1.500"/></svg>
        <label for="scale" class="ml-[10px] w-[21px]">縮尺</label>
        <div class="relative w-[63px]">
            <select id="scale" class="appearance-none block w-full h-[17px] border border-[#b4b4b4] rounded-[2px] bg-white font-['Liberation_Sans']"><option>171507648</option></select>
            <span class="absolute right-px inset-y-px w-[15px] flex items-center justify-center border-l border-[#c8c8c8] bg-[#f4f4f4] pointer-events-none"><svg class="w-[6px] h-1 text-[#555]"><use href="#caret"/></svg></span>
        </div>
        <svg class="w-3 h-3 ml-[9px]" viewBox="0 0 24 24"><path d="M6 11V7c0-7 12-7 12 0v4" fill="none" stroke="#777" stroke-width="3"/><rect x="3" y="10" width="18" height="13" rx="1.500" fill="#666"/></svg>
        <label for="mag" class="ml-[5px] w-[21px]">拡大</label>
        <div class="relative w-[66px]">
            <input id="mag" type="text" value="100%" class="block w-full h-[17px] px-[2px] border border-[#b4b4b4] rounded-[2px] bg-white font-['Liberation_Sans']">
            <span class="absolute right-px inset-y-px w-[10px] flex flex-col items-center justify-center gap-[3px] border-l border-[#c8c8c8] bg-[#f4f4f4] text-[#555]"><svg class="w-[5px] h-[3px] rotate-180"><use href="#caret"/></svg><svg class="w-[5px] h-[3px]"><use href="#caret"/></svg></span>
        </div>
        <label for="rot" class="ml-[7px] w-[25px]">回転</label>
        <div class="relative w-[66px]">
            <input id="rot" type="text" value="0.0 °" class="block w-full h-[17px] px-[2px] border border-[#b4b4b4] rounded-[2px] bg-white font-['Liberation_Sans']">
            <span class="absolute right-px inset-y-px w-[10px] flex flex-col items-center justify-center gap-[3px] border-l border-[#c8c8c8] bg-[#f4f4f4] text-[#555]"><svg class="w-[5px] h-[3px] rotate-180"><use href="#caret"/></svg><svg class="w-[5px] h-[3px]"><use href="#caret"/></svg></span>
        </div>
        <label class="relative flex items-center gap-1 ml-[5px] w-[47px]">
            <input type="checkbox" checked class="appearance-none w-[11px] h-[11px] border border-[#b4b4b4] bg-white">
            <svg class="absolute left-[2px] w-[8px] h-[8px]" viewBox="0 0 8 8"><path d="M1 4l2 3L7 .5" fill="none" stroke="#000" stroke-width="1.500"/></svg>
            レンダ
        </label>
        <button class="flex items-center gap-[1px] text-[8px] font-['Liberation_Sans']"><svg class="w-3 h-3" viewBox="0 0 24 24"><circle cx="12" cy="12" r="9" fill="#bbb" stroke="#777" stroke-width="1.500"/><path d="M12 3v18M1 12h22M4 7h16M4 17h16M8 4q-4 8 0 16M16 4q4 8 0 16" stroke="#666" stroke-width="1.500" fill="none"/></svg>EPSG:6690</button>
        <button aria-label="メッセージ" class="ml-[18px]"><svg class="w-[14px] h-[14px]" viewBox="0 0 24 24"><ellipse cx="12" cy="11" rx="11" ry="9" fill="#5f5f5f"/><path d="M14 18l7 5v-8z" fill="#5f5f5f"/></svg></button>
    </footer>
    <div class="absolute right-0 top-[58px] bottom-3 w-px bg-[#333]"></div>
</body>
</html>
